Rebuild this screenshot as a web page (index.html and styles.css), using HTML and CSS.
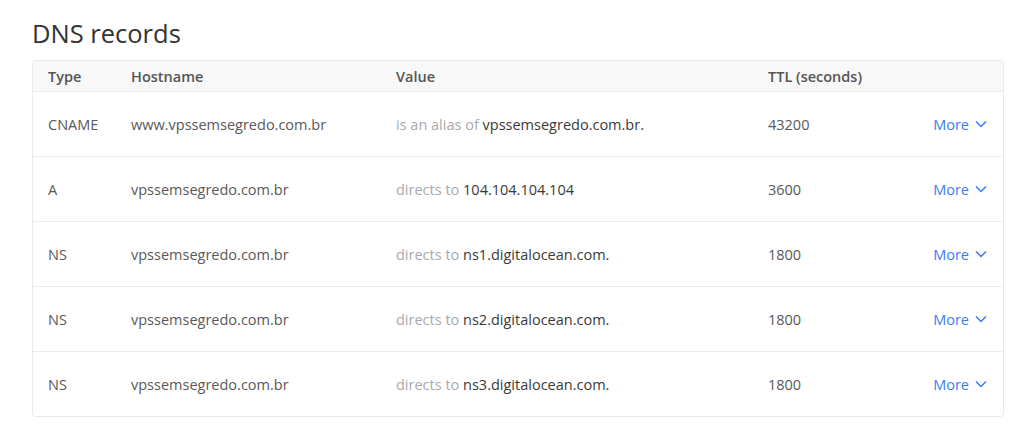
FILE: index.html
```html
<!DOCTYPE html>
<html lang="en">
<head>
  <meta charset="UTF-8" />
  <title>DNS records</title>
  <link rel="stylesheet" href="styles.css">
</head>
<body>
  <div class="page">
    <h2 class="title">DNS records</h2>

    <div class="records">
      <div class="row head">
        <div>Type</div>
        <div>Hostname</div>
        <div>Value</div>
        <div>TTL (seconds)</div>
        <div></div>
      </div>

      <div class="row">
        <div>CNAME</div>
        <div>www.vpssemsegredo.com.br</div>
        <div class="value"><span class="muted">is an alias of</span> vpssemsegredo.com.br.</div>
        <div>43200</div>
        <div class="more">More <svg viewBox="0 0 12 8"><path d="M1 1.5l5 5 5-5"/></svg></div>
      </div>

      <div class="row">
        <div>A</div>
        <div>vpssemsegredo.com.br</div>
        <div class="value"><span class="muted">directs to</span> 104.104.104.104</div>
        <div>3600</div>
        <div class="more">More <svg viewBox="0 0 12 8"><path d="M1 1.5l5 5 5-5"/></svg></div>
      </div>

      <div class="row">
        <div>NS</div>
        <div>vpssemsegredo.com.br</div>
        <div class="value"><span class="muted">directs to</span> ns1.digitalocean.com.</div>
        <div>1800</div>
        <div class="more">More <svg viewBox="0 0 12 8"><path d="M1 1.5l5 5 5-5"/></svg></div>
      </div>

      <div class="row">
        <div>NS</div>
        <div>vpssemsegredo.com.br</div>
        <div class="value"><span class="muted">directs to</span> ns2.digitalocean.com.</div>
        <div>1800</div>
        <div class="more">More <svg viewBox="0 0 12 8"><path d="M1 1.5l5 5 5-5"/></svg></div>
      </div>

      <div class="row">
        <div>NS</div>
        <div>vpssemsegredo.com.br</div>
        <div class="value"><span class="muted">directs to</span> ns3.digitalocean.com.</div>
        <div>1800</div>
        <div class="more">More <svg viewBox="0 0 12 8"><path d="M1 1.5l5 5 5-5"/></svg></div>
      </div>
    </div>
  </div>
</body>
</html>
```

FILE: styles.css
```css
body {
  margin: 0;
  background: #fff;
  color: #595959;
  font-family: "Open Sans", Arial, sans-serif;
  font-size: 14.5px;
}

.page {
  padding: 17px 20px 0 32px;
}

.title {
  margin: 0 0 11px;
  font-size: 25.5px;
  font-weight: 400;
  color: #333;
  line-height: 32px;
}

.records {
  border: 1px solid #e9e9e9;
  border-radius: 4px;
  overflow: hidden;
}

.row {
  display: grid;
  grid-template-columns: 83px 265px 372px 1fr 90px;
  align-items: center;
  height: 64px;
  padding: 0 16px 0 15px;
  border-top: 1px solid #ececec;
}

.row.head {
  height: 30px;
  border-top: none;
  background: #f8f8f8;
  border-bottom: 1px solid #ececec;
  font-weight: 600;
  font-size: 14.5px;
  color: #555;
}

.row.head + .row {
  border-top: none;
}

.value {
  color: #3a3a3a;
}

.muted {
  color: #aaa;
}

.more {
  color: #3b7cf6;
  text-align: right;
  display: flex;
  justify-content: flex-end;
  align-items: center;
  gap: 6px;
}

.more svg {
  width: 12px;
  height: 8px;
  fill: none;
  stroke: #3b7cf6;
  stroke-width: 1.5;
}
```
